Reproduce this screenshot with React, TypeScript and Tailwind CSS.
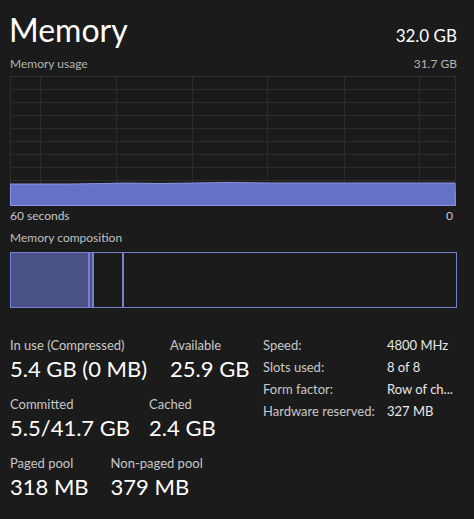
import React from 'react'

const font = { fontFamily: 'Lato, "Noto Sans", sans-serif' }

function UsageChart() {
  const w = 446
  const h = 130
  const rows = [13, 26, 39, 52, 65, 78, 91, 104, 117]
  const cols = [30, 106, 182, 257, 334, 409]
  // memory usage line, a little wobble along the top of the fill
  const pts = [
    [0, 108], [60, 108], [95, 107.5], [115, 107], [150, 107.5], [185, 107], [215, 106.5],
    [260, 107], [300, 107], [340, 107], [380, 107], [445, 107],
  ]
  const line = pts.map((p) => p.join(',')).join(' ')
  return (
    <svg width={w} height={h + 1} viewBox={`0 0 ${w} ${h + 1}`} className="block">
      <rect x={0.5} y={0.5} width={w - 1} height={h - 1} fill="#1b1b1b" stroke="#2e2e2e" strokeWidth={1} />
      {rows.map((y) => (
        <line key={y} x1={0} x2={w} y1={y + 0.5} y2={y + 0.5} stroke="#2c2c2c" strokeWidth={1} />
      ))}
      {cols.map((x) => (
        <line key={x} x1={x + 0.5} x2={x + 0.5} y1={0} y2={h} stroke="#2c2c2c" strokeWidth={1} />
      ))}
      <polygon points={`0,${h} ${line} ${w},${h}`} fill="#6571c6" />
      <polyline points={`0.5,108 ${line} 445.5,${h - 0.5} 0.5,${h - 0.5} 0.5,108`} fill="none" stroke="#8b95e2" strokeWidth={1} />
    </svg>
  )
}

function Stat({ label, value }: { label: string; value: string }) {
  return (
    <div className="flex flex-col">
      <span className="text-[13px] leading-[18px] text-[#c8c8c8]">{label}</span>
      <span className="text-[22px] leading-[30px] text-white">{value}</span>
    </div>
  )
}

const specs = [
  ['Speed:', '4800 MHz'],
  ['Slots used:', '8 of 8'],
  ['Form factor:', 'Row of ch...'],
  ['Hardware reserved:', '327 MB'],
]

export default function App() {
  return (
    <div className="w-[474px] h-[519px] bg-[#1b1b1b] overflow-hidden px-[10px]" style={font}>
      <div className="flex items-end justify-between h-[52px]">
        <span className="text-[32px] leading-[44px] text-white -ml-[1px]">Memory</span>
        <span className="text-[17px] leading-[24px] text-white mb-[4px] mr-[7px]">32.0 GB</span>
      </div>
      <div className="flex justify-between items-center h-[24px] text-[12px] text-[#b4b4b4] mr-[7px]">
        <span>Memory usage</span>
        <span>31.7 GB</span>
      </div>
      <UsageChart />
      <div className="flex justify-between items-center h-[18px] text-[12px] text-[#c8c8c8] mr-[11px]">
        <span>60 seconds</span>
        <span>0</span>
      </div>
      <div className="h-[22px] flex items-end text-[12px] text-[#c0c0c0]">Memory composition</div>
      <div className="mt-[5px] flex h-[56px] w-[447px] border border-[#7680d2]">
        <div className="w-[77px] bg-[#4b5288]" />
        <div className="w-[2px] bg-[#7680d2]" />
        <div className="w-[2px] bg-[#4b5288]" />
        <div className="w-[2px] bg-[#7680d2]" />
        <div className="w-[28px]" />
        <div className="w-[2px] bg-[#7680d2]" />
        <div className="flex-1" />
      </div>

      <div className="flex items-start mt-[28px]">
        <div className="flex flex-col gap-[11px] w-[250px]">
          <div className="flex gap-[23px]">
            <Stat label="In use (Compressed)" value="5.4 GB (0 MB)" />
            <Stat label="Available" value="25.9 GB" />
          </div>
          <div className="flex gap-[19px]">
            <Stat label="Committed" value="5.5/41.7 GB" />
            <Stat label="Cached" value="2.4 GB" />
          </div>
          <div className="flex gap-[22px]">
            <Stat label="Paged pool" value="318 MB" />
            <Stat label="Non-paged pool" value="379 MB" />
          </div>
        </div>
        <div className="grid grid-cols-[124px_1fr] gap-y-[4px] ml-[3px] text-[13px] leading-[18px]">
          {specs.map(([k, v]) => (
            <React.Fragment key={k}>
              <span className="text-[#c8c8c8] whitespace-nowrap">{k}</span>
              <span className="text-[#e8e8e8] whitespace-nowrap">{v}</span>
            </React.Fragment>
          ))}
        </div>
      </div>
    </div>
  )
}
